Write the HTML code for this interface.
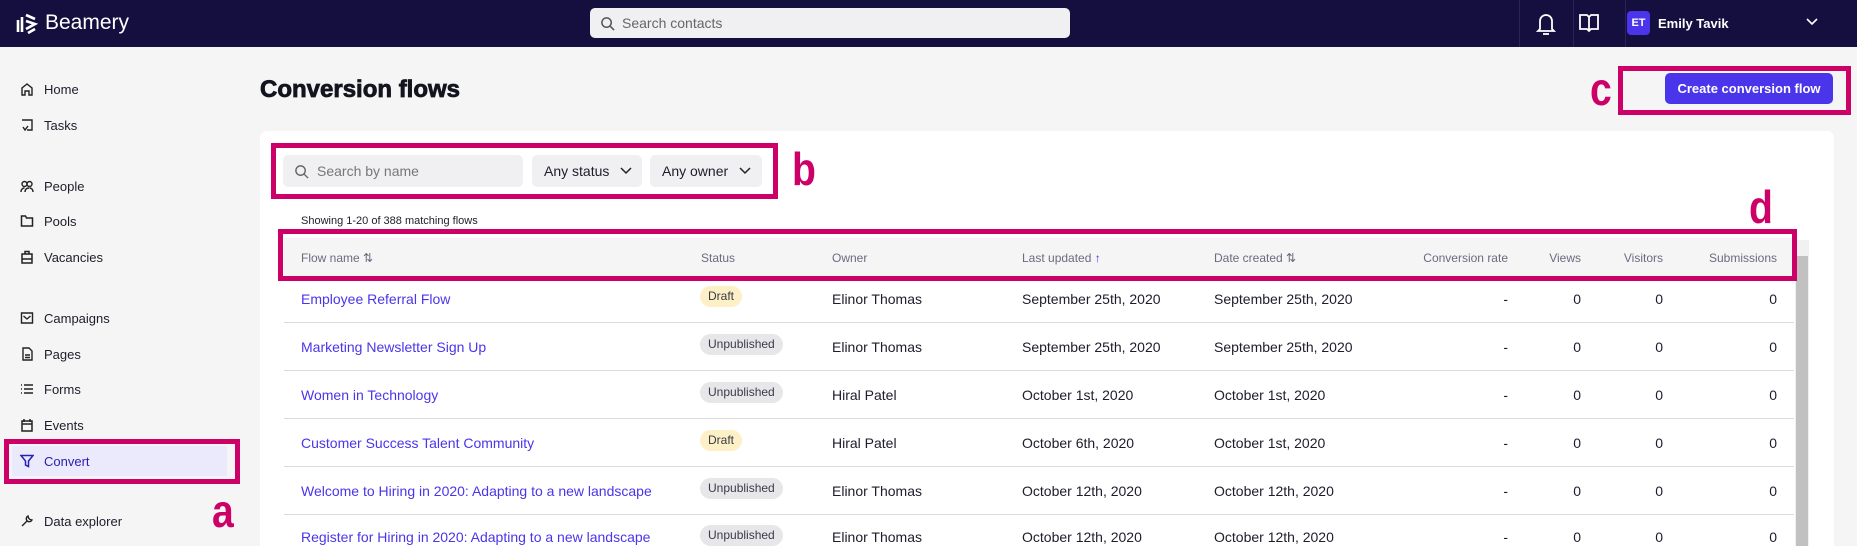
<!DOCTYPE html>
<html style="width:1857px;height:546px;overflow:hidden"><head><meta charset="utf-8"><style>
*{box-sizing:border-box;margin:0;padding:0}
body{width:1857px;height:546px;overflow:hidden;background:#f5f5f5;font-family:"Liberation Sans",sans-serif;position:relative;color:#1d1d2b}
.a{position:absolute}
.hdr{left:0;top:0;width:1857px;height:47px;background:#150f3f}
.nav{left:44px;font-size:13px;color:#1d1d2b}
.ic{left:20px;width:14px;height:14px}
.mg{position:absolute;border:5px solid #cc0066}
.lt{position:absolute;color:#cc0066;font-weight:bold;font-size:46px;line-height:1;transform:scaleX(.85);transform-origin:left top}
.th{position:absolute;top:251px;font-size:12px;color:#6b6b80}
.td{position:absolute;font-size:14px;color:#1d1d2b}
.lk{position:absolute;left:301px;font-size:14px;color:#4a35ea}
.pill{position:absolute;left:700px;height:21px;border-radius:11px;font-size:12px;line-height:21px;padding:0 8px;color:#3a3a48}
.sep{position:absolute;left:284px;width:1510px;height:1px;background:#dcdcdc}
.r{text-align:right}
</style></head><body>
<div class="a hdr"></div>
<svg class="a" style="left:15px;top:12px" width="24" height="24" viewBox="0 0 24 24" fill="none" stroke="#fff" stroke-width="2.6"><path d="M3 8v12M7 5v15M11 3l9 4M11 9l9 3-9 5M13 21l7-4"/></svg>
<div class="a" style="left:45px;top:11px;font-size:21px;color:#fff">Beamery</div>
<div class="a" style="left:590px;top:8px;width:480px;height:30px;background:#f0f0f2;border-radius:5px"></div>
<svg class="a" style="left:600px;top:16px" width="15" height="15" viewBox="0 0 16 16" fill="none" stroke="#555" stroke-width="1.6"><circle cx="7" cy="7" r="5"/><path d="M11 11l4 4"/></svg>
<div class="a" style="left:622px;top:15px;font-size:14px;color:#666">Search contacts</div>
<div class="a" style="left:1519px;top:0;width:1px;height:47px;background:#2a2458"></div>
<div class="a" style="left:1573px;top:0;width:1px;height:47px;background:#2a2458"></div>
<div class="a" style="left:1625px;top:0;width:1px;height:47px;background:#2a2458"></div>
<svg class="a" style="left:1536px;top:12px" width="20" height="24" viewBox="0 0 20 24" fill="none" stroke="#fff" stroke-width="1.8"><path d="M4 17V9a6 6 0 0 1 12 0v8l2 2H2z"/><path d="M7 22h6"/></svg>
<svg class="a" style="left:1578px;top:13px" width="22" height="20" viewBox="0 0 22 20" fill="none" stroke="#fff" stroke-width="1.8"><path d="M2 2h7l2 2 2-2h7v14h-7l-2 2-2-2H2z M11 4v14"/></svg>
<div class="a" style="left:1627px;top:11px;width:23px;height:24px;background:#4a35ea;border-radius:4px;color:#fff;font-size:11px;font-weight:bold;text-align:center;line-height:24px">ET</div>
<div class="a" style="left:1658px;top:16px;font-size:13px;color:#fff;font-weight:bold">Emily Tavik</div>
<svg class="a" style="left:1805px;top:17px" width="14" height="10" viewBox="0 0 14 10" fill="none" stroke="#fff" stroke-width="1.6"><path d="M2 2l5 5 5-5"/></svg>

<div class="a" style="left:12px;top:446px;width:215px;height:30px;background:#ebeafd"></div>
<svg class="a ic" style="top:82px" viewBox="0 0 14 14" fill="none" stroke="#222" stroke-width="1.4"><path d="M2 13V6l5-4 5 4v7H9V9H5v4z"/></svg><div class="a nav" style="top:82px">Home</div>
<svg class="a ic" style="top:118px" viewBox="0 0 14 14" fill="none" stroke="#222" stroke-width="1.4"><path d="M2 2h10v10H7M3 9l2 3 3-4"/></svg><div class="a nav" style="top:118px">Tasks</div>
<svg class="a ic" style="top:179px" viewBox="0 0 14 14" fill="none" stroke="#222" stroke-width="1.4"><circle cx="4.5" cy="5" r="2.5"/><circle cx="9.5" cy="5" r="2.5"/><path d="M1 13c0-3 2-4 3.5-4M13 13c0-3-2-4-3.5-4M5 13c0-3 2-4 4-4"/></svg><div class="a nav" style="top:179px">People</div>
<svg class="a ic" style="top:214px" viewBox="0 0 14 14" fill="none" stroke="#222" stroke-width="1.5"><path d="M1.5 2h4l1 2h6v8h-11z"/></svg><div class="a nav" style="top:214px">Pools</div>
<svg class="a ic" style="top:250px" viewBox="0 0 14 14" fill="none" stroke="#222" stroke-width="1.5"><path d="M2 4h10v9H2zM5 4V1.5h4V4M2 9h10"/></svg><div class="a nav" style="top:250px">Vacancies</div>
<svg class="a ic" style="top:311px" viewBox="0 0 14 14" fill="none" stroke="#222" stroke-width="1.4"><path d="M1.5 2h11v10h-11zM3.5 5l3.5 3 3.5-3"/></svg><div class="a nav" style="top:311px">Campaigns</div>
<svg class="a ic" style="top:347px" viewBox="0 0 14 14" fill="none" stroke="#222" stroke-width="1.4"><path d="M3 1h6l3 3v9H3zM5 8h5M5 10.5h5"/></svg><div class="a nav" style="top:347px">Pages</div>
<svg class="a ic" style="top:382px" viewBox="0 0 14 14" fill="none" stroke="#222" stroke-width="1.4"><path d="M1 3h1M1 7h1M1 11h1M4 3h9M4 7h9M4 11h9"/></svg><div class="a nav" style="top:382px">Forms</div>
<svg class="a ic" style="top:418px" viewBox="0 0 14 14" fill="none" stroke="#222" stroke-width="1.5"><path d="M2 3h10v10H2zM4 1v3M10 1v3M2 6h10"/></svg><div class="a nav" style="top:418px">Events</div>
<svg class="a ic" style="top:454px" viewBox="0 0 14 14" fill="none" stroke="#2a20b0" stroke-width="1.5"><path d="M1 1.5h12L8.5 7v5.5l-3-1.5V7z"/></svg><div class="a nav" style="top:454px;color:#2a20b0">Convert</div>
<svg class="a ic" style="top:514px" viewBox="0 0 14 14" fill="none" stroke="#222" stroke-width="1.4"><path d="M2 12l5-5M8 2a3 3 0 1 0 4 4l-2-.5-1.5-1.5z"/></svg><div class="a nav" style="top:514px">Data explorer</div>

<div class="a" style="left:260px;top:76px;font-size:24px;font-weight:bold;color:#14141f;-webkit-text-stroke:0.8px #14141f">Conversion flows</div>
<div class="a" style="left:1665px;top:73px;width:168px;height:31px;background:#4a35ea;border-radius:5px;color:#fff;font-size:13px;font-weight:bold;text-align:center;line-height:31px">Create conversion flow</div>
<div class="a" style="left:260px;top:131px;width:1574px;height:415px;background:#fff;border-radius:7px 7px 0 0"></div>

<div class="a" style="left:283px;top:155px;width:240px;height:32px;background:#f0f0f2;border-radius:5px"></div>
<svg class="a" style="left:294px;top:164px" width="15" height="15" viewBox="0 0 16 16" fill="none" stroke="#666" stroke-width="1.5"><circle cx="7" cy="7" r="5"/><path d="M11 11l4 4"/></svg>
<div class="a" style="left:317px;top:163px;font-size:14px;color:#777">Search by name</div>
<div class="a" style="left:532px;top:155px;width:110px;height:32px;background:#f0f0f2;border-radius:5px"></div>
<div class="a" style="left:544px;top:163px;font-size:14px">Any status</div>
<svg class="a" style="left:620px;top:167px" width="12" height="8" viewBox="0 0 12 8" fill="none" stroke="#222" stroke-width="1.5"><path d="M1 1l5 5 5-5"/></svg>
<div class="a" style="left:650px;top:155px;width:112px;height:32px;background:#f0f0f2;border-radius:5px"></div>
<div class="a" style="left:662px;top:163px;font-size:14px">Any owner</div>
<svg class="a" style="left:739px;top:167px" width="12" height="8" viewBox="0 0 12 8" fill="none" stroke="#222" stroke-width="1.5"><path d="M1 1l5 5 5-5"/></svg>

<div class="a" style="left:301px;top:215px;font-size:11px">Showing 1-20 of 388 matching flows</div>

<div class="a" style="left:284px;top:238px;width:1510px;height:39px;background:#f5f5f5"></div>
<div class="th" style="left:301px">Flow name ⇅</div>
<div class="th" style="left:701px">Status</div>
<div class="th" style="left:832px">Owner</div>
<div class="th" style="left:1022px">Last updated <span style="color:#4a35ea">↑</span></div>
<div class="th" style="left:1214px">Date created ⇅</div>
<div class="th r" style="left:1400px;width:108px">Conversion rate</div>
<div class="th r" style="left:1500px;width:81px">Views</div>
<div class="th r" style="left:1600px;width:63px">Visitors</div>
<div class="th r" style="left:1680px;width:97px">Submissions</div>

<div class="a" style="left:1795px;top:240px;width:14px;height:306px;background:#f1f1f1"></div>
<div class="a" style="left:1796px;top:256px;width:12px;height:290px;background:#c1c1c1"></div>

<div class="sep" style="top:322px"></div><div class="sep" style="top:370px"></div><div class="sep" style="top:418px"></div><div class="sep" style="top:466px"></div><div class="sep" style="top:514px"></div>

<div class="lk" style="top:291px">Employee Referral Flow</div>
<div class="pill" style="top:286px;background:#fdf0c6">Draft</div>
<div class="td" style="left:832px;top:291px">Elinor Thomas</div><div class="td" style="left:1022px;top:291px">September 25th, 2020</div><div class="td" style="left:1214px;top:291px">September 25th, 2020</div>

<div class="lk" style="top:339px">Marketing Newsletter Sign Up</div>
<div class="pill" style="top:334px;background:#e7e7ea">Unpublished</div>
<div class="td" style="left:832px;top:339px">Elinor Thomas</div><div class="td" style="left:1022px;top:339px">September 25th, 2020</div><div class="td" style="left:1214px;top:339px">September 25th, 2020</div>

<div class="lk" style="top:387px">Women in Technology</div>
<div class="pill" style="top:382px;background:#e7e7ea">Unpublished</div>
<div class="td" style="left:832px;top:387px">Hiral Patel</div><div class="td" style="left:1022px;top:387px">October 1st, 2020</div><div class="td" style="left:1214px;top:387px">October 1st, 2020</div>

<div class="lk" style="top:435px">Customer Success Talent Community</div>
<div class="pill" style="top:430px;background:#fdf0c6">Draft</div>
<div class="td" style="left:832px;top:435px">Hiral Patel</div><div class="td" style="left:1022px;top:435px">October 6th, 2020</div><div class="td" style="left:1214px;top:435px">October 1st, 2020</div>

<div class="lk" style="top:483px">Welcome to Hiring in 2020: Adapting to a new landscape</div>
<div class="pill" style="top:478px;background:#e7e7ea">Unpublished</div>
<div class="td" style="left:832px;top:483px">Elinor Thomas</div><div class="td" style="left:1022px;top:483px">October 12th, 2020</div><div class="td" style="left:1214px;top:483px">October 12th, 2020</div>

<div class="lk" style="top:529px">Register for Hiring in 2020: Adapting to a new landscape</div>
<div class="pill" style="top:525px;background:#e7e7ea">Unpublished</div>
<div class="td" style="left:832px;top:529px">Elinor Thomas</div><div class="td" style="left:1022px;top:529px">October 12th, 2020</div><div class="td" style="left:1214px;top:529px">October 12th, 2020</div>

<div class="td r" style="left:1400px;width:108px;top:291px">-</div><div class="td r" style="left:1500px;width:81px;top:291px">0</div><div class="td r" style="left:1600px;width:63px;top:291px">0</div><div class="td r" style="left:1680px;width:97px;top:291px">0</div>
<div class="td r" style="left:1400px;width:108px;top:339px">-</div><div class="td r" style="left:1500px;width:81px;top:339px">0</div><div class="td r" style="left:1600px;width:63px;top:339px">0</div><div class="td r" style="left:1680px;width:97px;top:339px">0</div>
<div class="td r" style="left:1400px;width:108px;top:387px">-</div><div class="td r" style="left:1500px;width:81px;top:387px">0</div><div class="td r" style="left:1600px;width:63px;top:387px">0</div><div class="td r" style="left:1680px;width:97px;top:387px">0</div>
<div class="td r" style="left:1400px;width:108px;top:435px">-</div><div class="td r" style="left:1500px;width:81px;top:435px">0</div><div class="td r" style="left:1600px;width:63px;top:435px">0</div><div class="td r" style="left:1680px;width:97px;top:435px">0</div>
<div class="td r" style="left:1400px;width:108px;top:483px">-</div><div class="td r" style="left:1500px;width:81px;top:483px">0</div><div class="td r" style="left:1600px;width:63px;top:483px">0</div><div class="td r" style="left:1680px;width:97px;top:483px">0</div>
<div class="td r" style="left:1400px;width:108px;top:529px">-</div><div class="td r" style="left:1500px;width:81px;top:529px">0</div><div class="td r" style="left:1600px;width:63px;top:529px">0</div><div class="td r" style="left:1680px;width:97px;top:529px">0</div>

<div class="mg" style="left:4px;top:439px;width:236px;height:45px"></div>
<div class="lt" style="left:212px;top:488px">a</div>
<div class="mg" style="left:271px;top:143px;width:507px;height:56px"></div>
<div class="lt" style="left:792px;top:146px">b</div>
<div class="mg" style="left:1618px;top:66px;width:233px;height:49px"></div>
<div class="lt" style="left:1590px;top:66px">c</div>
<div class="mg" style="left:278px;top:229px;width:1519px;height:52px"></div>
<div class="lt" style="left:1749px;top:184px">d</div>
</body></html>
